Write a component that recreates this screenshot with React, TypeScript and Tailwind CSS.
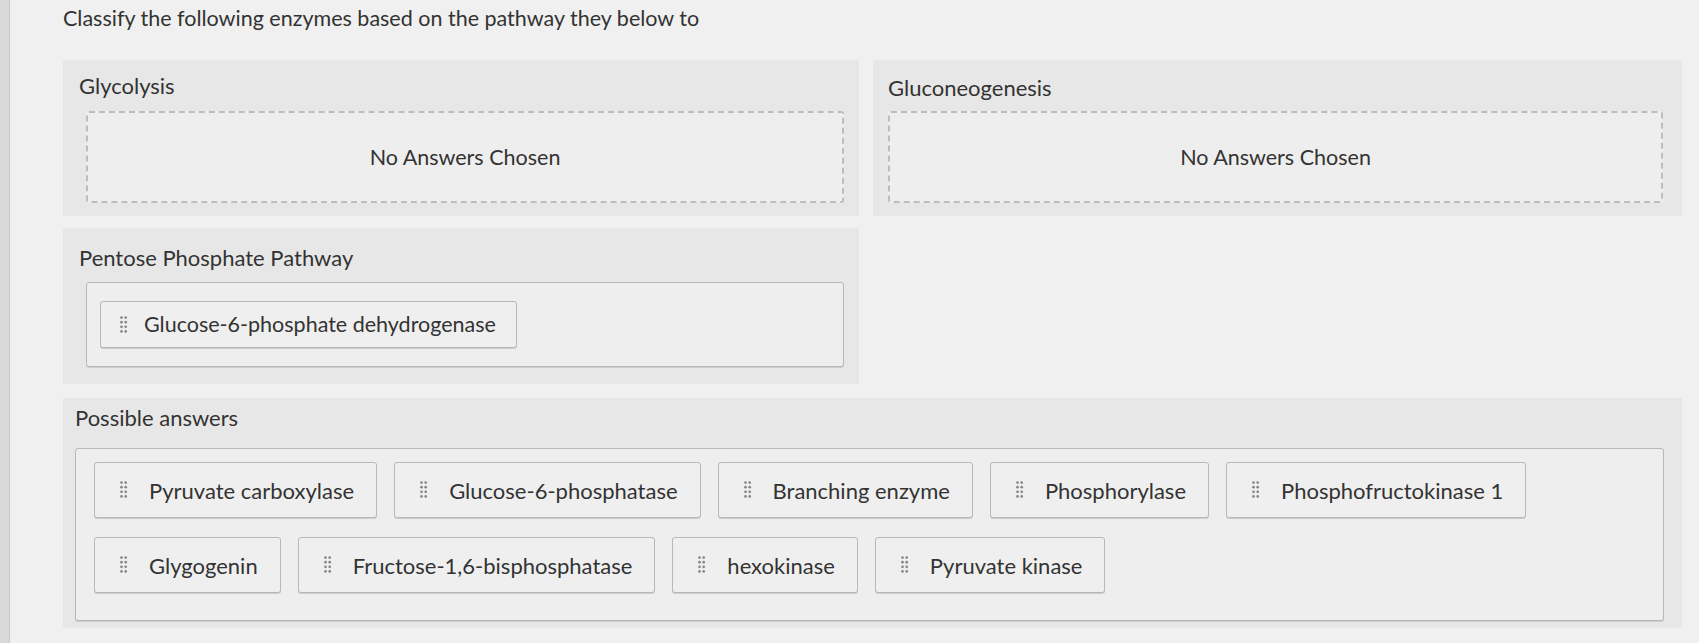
import React from "react";

type Zone = {
  title: string;
  items: string[];
};

const possible = [
  ["Pyruvate carboxylase", "Glucose-6-phosphatase", "Branching enzyme", "Phosphorylase", "Phosphofructokinase 1"],
  ["Glygogenin", "Fructose-1,6-bisphosphatase", "hexokinase", "Pyruvate kinase"],
];

function DragHandle() {
  const dots = [];
  for (let r = 0; r < 4; r++) {
    for (let c = 0; c < 2; c++) {
      dots.push(<circle key={`${r}-${c}`} cx={1.5 + c * 4.2} cy={1.6 + r * 4.6} r={1.35} />);
    }
  }
  return (
    <svg viewBox="0 0 8 18" className="h-[18px] w-[8px] shrink-0 fill-[#878787]" aria-hidden="true">
      {dots}
    </svg>
  );
}

function Chip({ label, big }: { label: string; big?: boolean }) {
  return (
    <div
      className={
        big
          ? "flex h-[56px] items-center gap-[21px] rounded-[3px] border border-[#b8b8b8] bg-[#efefef] pl-[25px] pr-[22px] text-[22px] shadow-[0_1px_0_#cccccc]"
          : "flex h-[47px] items-center gap-[16px] rounded-[3px] border border-[#b8b8b8] bg-[#efefef] pl-[19px] pr-[20px] text-[21.5px] shadow-[0_1px_0_#cccccc]"
      }
    >
      <DragHandle />
      <span>{label}</span>
    </div>
  );
}

function EmptyZone({ title, right }: Zone & { right?: boolean }) {
  return (
    <div className={right ? "flex flex-col bg-[#e7e7e7] pt-[14px] pb-[13px]" : "flex flex-col bg-[#e7e7e7] pt-[12px] pb-[13px]"}>
      <div className={right ? "pl-[15px] text-[22px] leading-[28px]" : "pl-[16px] text-[22px] leading-[28px]"}>
        {title}
      </div>
      <div
        className={
          right
            ? "mt-[9px] ml-[15px] mr-[19px] flex flex-1 items-center justify-center rounded-[3px] border-2 border-dashed border-[#bdbdbd] bg-[#eeeeee] text-[21.5px]"
            : "mt-[11px] ml-[23px] mr-[15px] flex flex-1 items-center justify-center rounded-[3px] border-2 border-dashed border-[#bdbdbd] bg-[#eeeeee] text-[21.5px]"
        }
      >
        No Answers Chosen
      </div>
    </div>
  );
}

export default function App() {
  return (
    <div className="h-[643px] w-[1699px] overflow-hidden border-l-[9px] border-[#d9d9d9] bg-[#f0f0f0] font-['Lato',sans-serif] text-[#333333]">
      <div className="h-full border-l border-[#c9c9c9] pl-[53px] pr-[17px] pt-[4px]">
        <h1 className="text-[21.5px] leading-[28px]">
          Classify the following enzymes based on the pathway they below to
        </h1>

        <div className="mt-[28px] grid grid-cols-[796px_809px] grid-rows-[156px_156px_232px] gap-x-[14px] gap-y-[12px]">
          <EmptyZone title="Glycolysis" items={[]} />
          <EmptyZone title="Gluconeogenesis" items={[]} right />

          {/* filled bucket */}
          <div className="flex flex-col bg-[#e7e7e7] pt-[16px] pb-[17px]">
            <div className="pl-[16px] text-[22px] leading-[28px]">Pentose Phosphate Pathway</div>
            <div className="mt-[10px] ml-[23px] mr-[15px] flex flex-1 items-center rounded-[3px] border border-[#b8b8b8] bg-[#eeeeee] px-[13px] shadow-[0_1px_0_#cccccc]">
              <Chip label="Glucose-6-phosphate dehydrogenase" />
            </div>
          </div>
          <div />

          <div className="col-span-2 mt-[2px] flex flex-col bg-[#e7e7e7] pt-[6px] pb-[7px] pl-[12px] pr-[18px]">
            <div className="text-[22px] leading-[28px]">Possible answers</div>
            <div className="mt-[16px] flex flex-1 flex-col gap-[19px] rounded-[3px] border border-[#b8b8b8] bg-[#eeeeee] pl-[18px] pt-[13px] shadow-[0_1px_0_#cccccc]">
              {possible.map((row, i) => (
                <div key={i} className="flex gap-[17px]">
                  {row.map((p) => (
                    <Chip key={p} label={p} big />
                  ))}
                </div>
              ))}
            </div>
          </div>
        </div>
      </div>
    </div>
  );
}
